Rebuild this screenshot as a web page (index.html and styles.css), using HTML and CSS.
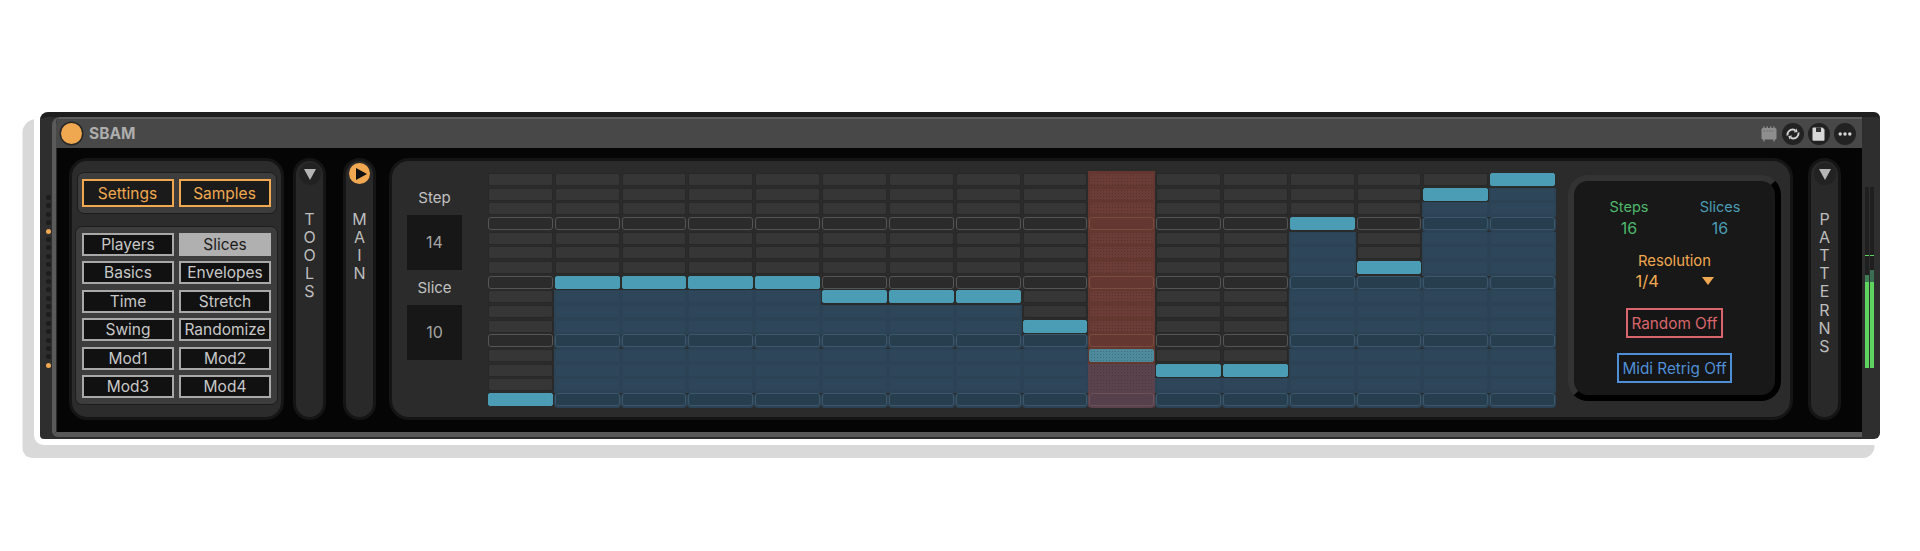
FILE: index.html
```html
<!DOCTYPE html>
<html lang="en">
<head>
    <meta charset="UTF-8">
    <meta name="viewport" content="width=device-width, initial-scale=1.0">
    <title>SBAM</title>
    <link rel="stylesheet" href="styles.css">
</head>
<body>
    <div class="device">
        <div class="rail">
            <span></span><span></span><span></span><span></span><span class="lit"></span><span></span><span></span>
            <span></span><span></span><span></span><span></span><span></span><span></span><span></span>
            <span></span><span></span><span></span><span></span><span></span><span></span><span class="lit"></span>
        </div>

        <div class="panel">
            <div class="title-bar">
                <div class="power"></div>
                <div class="title">SBAM</div>
                <div class="title-icons">
                    <svg class="calendar" width="16" height="16" viewBox="0 0 16 16">
                        <path d="M3 0.5v2M6.3 0.5v2M9.7 0.5v2M13 0.5v2M3 13v2.5M13 13v2.5" stroke="#8e8e8e" stroke-width="1.4"/>
                        <rect x="0.5" y="2" width="15" height="11.5" rx="1.5" fill="#8e8e8e"/>
                        <path d="M2.5 5h11" stroke="#6a6a6a" stroke-width="1.2" stroke-dasharray="1.5 1.2"/>
                    </svg>
                    <div class="round-icon">
                        <svg width="16" height="16" viewBox="0 0 16 16" fill="none">
                            <path d="M2.5 9.5C2 6 5 3.4 8 3.6c1 0 1.6.3 2.2.7" stroke="#d0d0d0" stroke-width="2"/>
                            <path d="M13.5 6.5c.5 3.5-2.5 6.1-5.5 5.9-1 0-1.6-.3-2.2-.7" stroke="#d0d0d0" stroke-width="2"/>
                            <path d="M8.8 6.6L12.6 6 11.6 2.4z" fill="#d0d0d0"/>
                            <path d="M7.2 9.4L3.4 10l1 3.6z" fill="#d0d0d0"/>
                        </svg>
                    </div>
                    <div class="round-icon">
                        <svg width="16" height="16" viewBox="0 0 16 16">
                            <path d="M2.5 1.5h9l2 2v10.2a1 1 0 0 1-1 1h-10a1 1 0 0 1-1-1V2.5a1 1 0 0 1 1-1z" fill="#d8d8d8"/>
                            <rect x="5" y="1.5" width="5" height="4.5" fill="#333"/>
                        </svg>
                    </div>
                    <div class="round-icon">
                        <svg width="16" height="16" viewBox="0 0 16 16" fill="#d8d8d8">
                            <circle cx="3.2" cy="8" r="1.7"/><circle cx="8" cy="8" r="1.7"/><circle cx="12.8" cy="8" r="1.7"/>
                        </svg>
                    </div>
                </div>
            </div>

            <div class="content">
                <div class="tools-panel">
                    <div class="tab-group top-tabs">
                        <div class="tab orange">Settings</div>
                        <div class="tab orange">Samples</div>
                    </div>
                    <div class="tab-group param-tabs">
                        <div class="tab">Players</div>
                        <div class="tab selected">Slices</div>
                        <div class="tab">Basics</div>
                        <div class="tab">Envelopes</div>
                        <div class="tab">Time</div>
                        <div class="tab">Stretch</div>
                        <div class="tab">Swing</div>
                        <div class="tab">Randomize</div>
                        <div class="tab">Mod1</div>
                        <div class="tab">Mod2</div>
                        <div class="tab">Mod3</div>
                        <div class="tab">Mod4</div>
                    </div>
                </div>

                <div class="strip strip-tools">
                    <div class="fold-btn"><div class="tri-down"></div></div>
                    <div class="strip-label">TOOLS</div>
                </div>

                <div class="strip strip-main">
                    <div class="play-btn"><div class="tri-right"></div></div>
                    <div class="strip-label">MAIN</div>
                </div>

                <div class="main-panel">
                    <div class="readouts">
                        <div class="readout-label">Step</div>
                        <div class="readout-box">14</div>
                        <div class="readout-label">Slice</div>
                        <div class="readout-box">10</div>
                    </div>

                    <!-- filled in by grid.js -->
                    <div class="step-grid" id="step-grid"></div>

                    <div class="display">
                        <div class="counts">
                            <div class="count green">Steps<span>16</span></div>
                            <div class="count teal">Slices<span>16</span></div>
                        </div>
                        <div class="resolution">Resolution</div>
                        <div class="resolution-value">
                            <span>1/4</span>
                            <div class="tri-small"></div>
                        </div>
                        <div class="toggle random">Random Off</div>
                        <div class="toggle retrig">Midi Retrig Off</div>
                    </div>
                </div>

                <div class="strip strip-patterns">
                    <div class="fold-btn"><div class="tri-down"></div></div>
                    <div class="strip-label">PATTERNS</div>
                </div>
            </div>
        </div>

        <div class="side">
            <div class="meter">
                <div class="meter-bar"><div class="meter-tick"></div><div class="meter-level left"></div></div>
                <div class="meter-bar"><div class="meter-tick"></div><div class="meter-level right"></div></div>
            </div>
        </div>
    </div>

    <script src="grid.js"></script>
</body>
</html>
```

FILE: styles.css
```css
/* Reset */
* {
    margin: 0;
    padding: 0;
    box-sizing: border-box;
    font-family: Inter, "Liberation Sans", sans-serif;
}

body {
    height: 551px;
    background: #fff;
    padding: 112px 0 0 40px;
    overflow: hidden;
}

.device {
    display: flex;
    width: 1840px;
    height: 327px;
    background: #2e2e2e;
    border-top: 5px solid #1f1f1f;
    border-radius: 8px 6px 6px 4px;
    box-shadow: 0 0 0 6px #fff, -11.5px 13px 0 6px #d9d9d9;
}

/* Left rail */
.rail {
    width: 12px;
    padding: 78px 0 0 6px;
    display: flex;
    flex-direction: column;
    gap: 3.4px;
}

.rail span {
    width: 5px;
    height: 5px;
    border-radius: 50%;
    background: #1d1d1d;
}

.rail .lit {
    background: #f0a950;
}

/* Main frame */
.panel {
    width: 1810px;
    height: 320px;
    display: flex;
    flex-direction: column;
    border-left: 4px solid #5a5a5a;
    border-bottom: 5px solid #585858;
    border-radius: 8px 0 0 6px;
    background: #050505;
    overflow: hidden;
}

.title-bar {
    height: 31px;
    flex-shrink: 0;
    display: flex;
    align-items: center;
    padding: 0 5px;
    background: #484848;
    border-top: 2px solid #5f5f5f;
}

.power {
    width: 21px;
    height: 21px;
    border-radius: 50%;
    background: #f0a850;
    box-shadow: 0 0 0 1.5px #262626;
}

.title {
    margin-left: 7px;
    font-size: 15.5px;
    font-weight: 700;
    color: #adadad;
}

.title-icons {
    margin-left: auto;
    display: flex;
    align-items: center;
    gap: 4px;
    padding-right: 1px;
}

.calendar {
    margin-right: 1px;
}

.round-icon {
    width: 22px;
    height: 22px;
    border-radius: 50%;
    background: #222;
    display: flex;
    align-items: center;
    justify-content: center;
}

.content {
    flex: 1;
    display: flex;
    align-items: stretch;
    padding: 10px 20px 12px 13px;
    box-shadow: inset 1px 0 0 #2a2a2a;
}

/* Tabs */
.tools-panel {
    width: 215px;
    padding: 11px 3px 0 3px;
    display: flex;
    flex-direction: column;
    align-items: center;
    gap: 12px;
    background: #2c2c2c;
    border: 3px solid #151515;
    border-radius: 18px;
}

.tab-group {
    display: grid;
    grid-template-columns: 92px 92px;
    column-gap: 5px;
    background: #3d3d3d;
    border: 1px solid #1c1c1c;
    border-radius: 7px;
}

.top-tabs {
    width: 200px;
    height: 42px;
    padding: 6px 0 0 4px;
}

.param-tabs {
    width: 203px;
    height: 179px;
    padding: 6px 0 0 6px;
    row-gap: 5.4px;
    grid-auto-rows: 23px;
}

.tab {
    display: flex;
    align-items: center;
    justify-content: center;
    background: #111;
    border: 2px solid #a8a8a8;
    color: #c8c8c8;
    font-size: 15.5px;
    white-space: nowrap;
}

.tab.orange {
    height: 28px;
    border-color: #f0a950;
    color: #f0a950;
    background: #1b1b1b;
}

.tab.selected {
    background: #b0b0b0;
    border-color: #b0b0b0;
    color: #1b1b1b;
}

/* Vertical strips */
.strip {
    width: 33px;
    display: flex;
    flex-direction: column;
    align-items: center;
    padding-top: 2px;
    background: #292929;
    border: 3px solid #151515;
    border-radius: 17px;
}

.strip-tools {
    margin-left: 9px;
}

.strip-main {
    margin-left: 17px;
}

.strip-patterns {
    margin-left: 15px;
}

.fold-btn {
    width: 22px;
    height: 22px;
    border-radius: 50%;
    background: #222;
    display: flex;
    align-items: center;
    justify-content: center;
}

.tri-down {
    width: 0;
    height: 0;
    border-left: 6.5px solid transparent;
    border-right: 6.5px solid transparent;
    border-top: 11px solid #b5b5b5;
}

.play-btn {
    width: 21px;
    height: 21px;
    margin-bottom: 1px;
    border-radius: 50%;
    background: #f0a950;
    display: flex;
    align-items: center;
    justify-content: center;
}

.tri-right {
    width: 0;
    height: 0;
    margin-left: 3px;
    border-top: 6.5px solid transparent;
    border-bottom: 6.5px solid transparent;
    border-left: 11px solid #111;
}

.strip-label {
    margin-top: 24px;
    writing-mode: vertical-rl;
    text-orientation: upright;
    font-size: 16px;
    letter-spacing: -1.9px;
    line-height: 20px;
    color: #bdbdbd;
}

/* Main panel */
.main-panel {
    width: 1404px;
    margin-left: 13px;
    display: flex;
    align-items: flex-start;
    background: #2b2b2b;
    border: 3px solid #151515;
    border-radius: 20px;
}

.readouts {
    width: 55px;
    margin-left: 15px;
    padding-top: 27px;
    text-align: center;
}

.readout-label {
    height: 20px;
    line-height: 20px;
    margin-bottom: 7px;
    font-size: 15px;
    color: #c2c2c2;
}

.readout-box {
    height: 55px;
    line-height: 55px;
    margin-bottom: 8px;
    background: #171717;
    font-size: 16px;
    color: #a5a5a5;
}

.step-grid {
    width: 1069px;
    height: 236px;
    margin: 10px 0 0 25px;
    display: grid;
    grid-template-columns: repeat(16, 1fr);
}

.step-col {
    display: flex;
    flex-direction: column;
    justify-content: space-between;
    padding: 2px 1px 1px;
}

.cell {
    height: 13px;
    background: #363636;
    border: 1px solid #282828;
    border-radius: 2px;
}

.cell.beat {
    background: #2b2b2b;
    border-color: #555;
    border-radius: 3px;
}

.cell.fill {
    background: #2d4659;
    border-color: #2b4354;
    box-shadow: 0 1px 0 1px #2b4354;
    border-radius: 0;
}

.cell.fill.beat {
    background: #273e4f;
    border-color: #3c566a;
    border-radius: 3px;
}

.cell.bar {
    background: #4a9db5;
    border-color: #4a9db5;
    border-radius: 2px;
}

/* Column under the playhead, dithered like the original */
.step-col.current {
    background: #63382f;
}

.current .cell {
    background-color: #6b3d36;
    background-image: radial-gradient(#00000033 0.6px, transparent 0.8px);
    background-size: 3px 3px;
    border-color: #63362f;
}

.current .cell.beat {
    background-color: #643830;
    background-size: 7px 4px;
    border-color: #7c4a41;
}

.current .cell.fill {
    background-color: #5b434e;
    border-color: #5a424d;
    box-shadow: 0 1px 0 1px #5a424d;
}

.current .cell.fill.beat {
    background-color: #56404b;
    border-color: #6a5059;
}

.current .cell.bar {
    background-color: #4d8a9c;
    border-color: #4d8a9c;
}

/* Right display */
.display {
    width: 213px;
    height: 226px;
    margin: 14px 0 0 12px;
    padding-top: 16px;
    display: flex;
    flex-direction: column;
    align-items: center;
    background: #181818;
    border: 6px solid;
    border-color: #333 #000 #000 #333;
    border-radius: 20px;
    font-size: 14.5px;
}

.counts {
    width: 182px;
    display: grid;
    grid-template-columns: 1fr 1fr;
    text-align: center;
}

.count {
    line-height: 20px;
}

.count span {
    display: block;
    margin-top: 1px;
    font-size: 16px;
}

.green {
    color: #4fb86c;
}

.teal {
    color: #4a9db5;
}

.resolution {
    margin-top: 13px;
    line-height: 20px;
    font-size: 14.8px;
    color: #f0a950;
}

.resolution-value {
    width: 78px;
    height: 20px;
    display: flex;
    align-items: center;
    justify-content: space-between;
    font-size: 16.5px;
    color: #f0a950;
}

.tri-small {
    width: 0;
    height: 0;
    border-left: 6px solid transparent;
    border-right: 6px solid transparent;
    border-top: 8px solid #f0a950;
}

.toggle {
    height: 30px;
    display: flex;
    align-items: center;
    justify-content: center;
    border: 2px solid;
    background: #151515;
    font-size: 15.3px;
    white-space: nowrap;
}

.random {
    width: 97px;
    margin-top: 17px;
    border-color: #d9666c;
    color: #d9666c;
}

.retrig {
    width: 115px;
    margin-top: 15px;
    border-color: #4f8fd6;
    color: #4f8fd6;
}

/* Output meter */
.side {
    width: 18px;
    padding: 70px 0 0 3px;
}

.meter {
    display: flex;
    gap: 1px;
    height: 181px;
}

.meter-bar {
    width: 4px;
    display: flex;
    flex-direction: column;
    background: #1f1f1f;
}

.meter-tick {
    height: 1px;
    margin-top: 68px;
    background: #5fd35f;
}

.meter-level {
    margin-top: auto;
    background: #5fd35f;
}

.meter-level.left {
    height: 86px;
    box-shadow: 0 -7px 0 #3f7f55;
}

.meter-level.right {
    height: 86px;
    box-shadow: 0 -12px 0 #3a6d52;
}
```

FILE: grid.js
```js
// row of the bar in each column, 0 is the top row
const steps = [15, 7, 7, 7, 7, 8, 8, 8, 10, 12, 13, 13, 3, 6, 1, 0];
const currentCol = 9;

const grid = document.getElementById('step-grid');

steps.forEach((barRow, col) => {
    const column = document.createElement('div');
    column.className = col === currentCol ? 'step-col current' : 'step-col';

    for (let row = 0; row < 16; row++) {
        const cell = document.createElement('div');
        cell.className = 'cell';
        if (row % 4 === 3) cell.classList.add('beat');
        if (row === barRow) cell.classList.add('bar');
        if (row > barRow) cell.classList.add('fill');
        column.appendChild(cell);
    }

    grid.appendChild(column);
});
```
